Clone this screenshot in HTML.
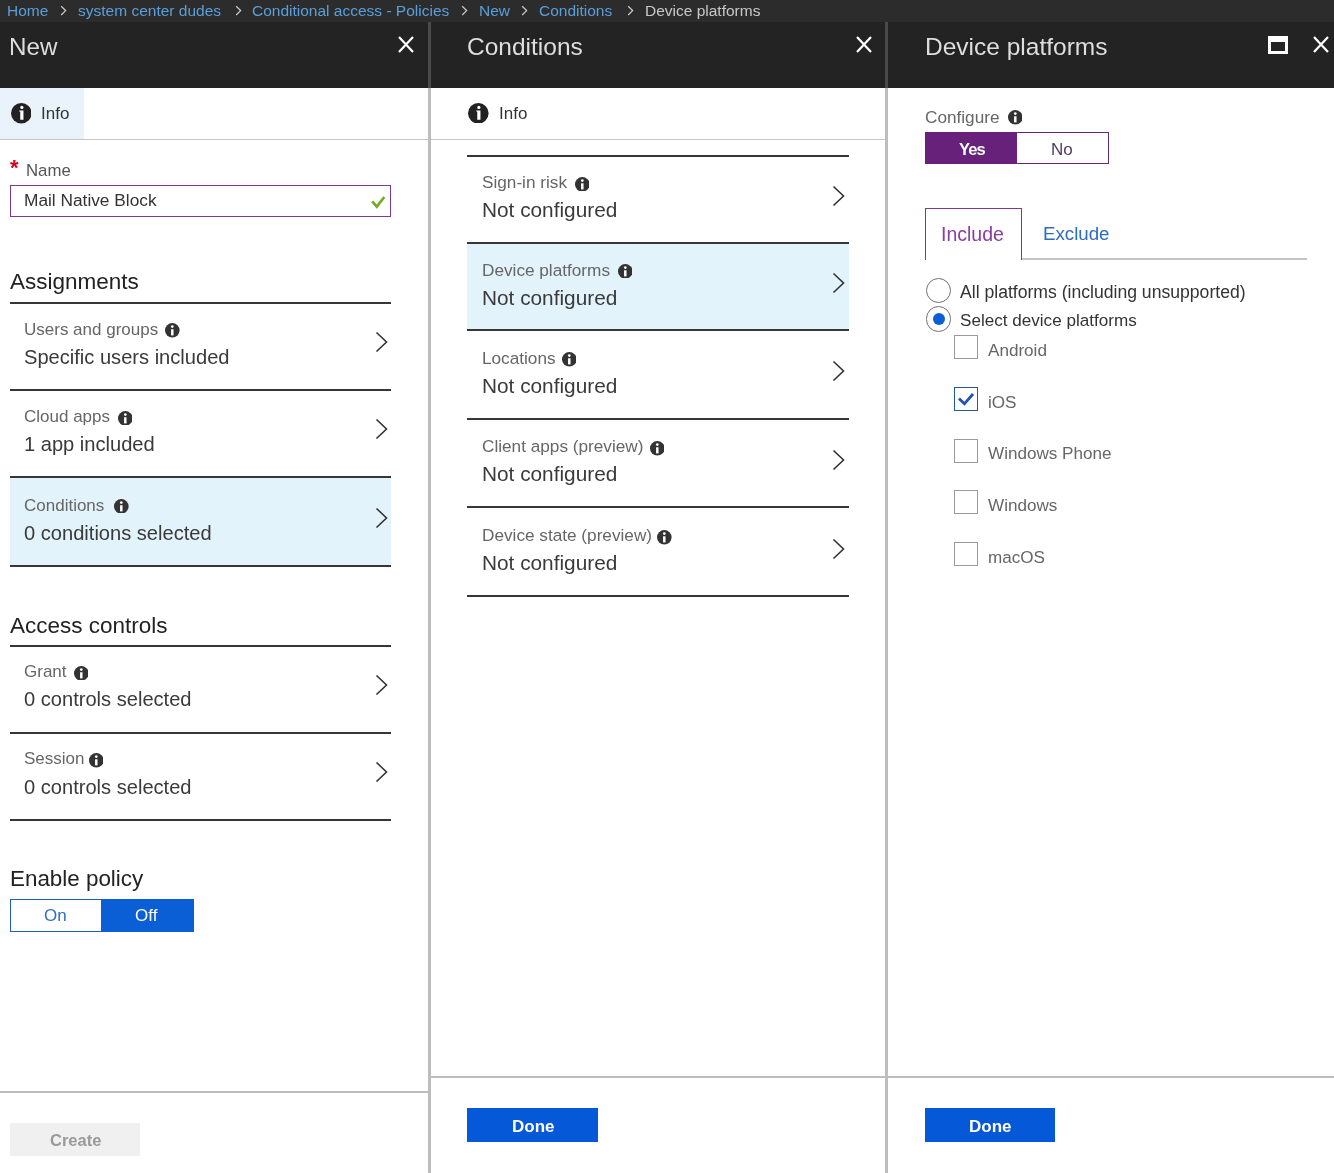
<!DOCTYPE html>
<html><head><meta charset="utf-8"><title>Device platforms</title>
<style>
html,body{margin:0;padding:0;background:#fff;}
body{width:1334px;height:1173px;position:relative;overflow:hidden;font-family:"Liberation Sans",sans-serif;}
.t{position:absolute;line-height:1;white-space:nowrap;will-change:transform;}
.r{position:absolute;display:block;}
</style></head><body>
<div class="r" style="left:0px;top:0px;width:1334px;height:22px;background:#2c2c2c;"></div>
<div class="t" style="left:6.8px;top:2.88px;font-size:15.5px;color:#5a9fdb;font-weight:normal">Home</div>
<svg class="r" style="left:60px;top:4.6px" width="8" height="12" viewBox="0 0 8 12"><path d="M1.2 1.2L5.6 5.6L1.2 10" stroke="#c8c8c8" stroke-width="1.3" fill="none"/></svg>
<div class="t" style="left:78px;top:2.88px;font-size:15.5px;color:#5a9fdb;font-weight:normal">system center dudes</div>
<svg class="r" style="left:234.5px;top:4.6px" width="8" height="12" viewBox="0 0 8 12"><path d="M1.2 1.2L5.6 5.6L1.2 10" stroke="#c8c8c8" stroke-width="1.3" fill="none"/></svg>
<div class="t" style="left:252.2px;top:2.88px;font-size:15.5px;color:#5a9fdb;font-weight:normal">Conditional access - Policies</div>
<svg class="r" style="left:460.5px;top:4.6px" width="8" height="12" viewBox="0 0 8 12"><path d="M1.2 1.2L5.6 5.6L1.2 10" stroke="#c8c8c8" stroke-width="1.3" fill="none"/></svg>
<div class="t" style="left:478.8px;top:2.88px;font-size:15.5px;color:#5a9fdb;font-weight:normal">New</div>
<svg class="r" style="left:521px;top:4.6px" width="8" height="12" viewBox="0 0 8 12"><path d="M1.2 1.2L5.6 5.6L1.2 10" stroke="#c8c8c8" stroke-width="1.3" fill="none"/></svg>
<div class="t" style="left:539px;top:2.88px;font-size:15.5px;color:#5a9fdb;font-weight:normal">Conditions</div>
<svg class="r" style="left:626.5px;top:4.6px" width="8" height="12" viewBox="0 0 8 12"><path d="M1.2 1.2L5.6 5.6L1.2 10" stroke="#c8c8c8" stroke-width="1.3" fill="none"/></svg>
<div class="t" style="left:644.7px;top:2.88px;font-size:15.5px;color:#c8c8c8;font-weight:normal">Device platforms</div>
<div class="r" style="left:0px;top:22px;width:1334px;height:66px;background:#232323;"></div>
<div class="t" style="left:8.9px;top:34.71px;font-size:24.2px;color:#dedede;font-weight:normal">New</div>
<div class="t" style="left:467.2px;top:35.26px;font-size:24.5px;color:#dedede;font-weight:normal">Conditions</div>
<div class="t" style="left:924.6px;top:34.86px;font-size:24.5px;color:#dedede;font-weight:normal">Device platforms</div>
<svg class="r" style="left:398px;top:36.4px" width="16" height="17" viewBox="0 0 16 17"><path d="M1 1L15 16M15 1L1 16" stroke="#fff" stroke-width="2.2" fill="none"/></svg>
<svg class="r" style="left:856px;top:36.4px" width="16" height="17" viewBox="0 0 16 17"><path d="M1 1L15 16M15 1L1 16" stroke="#fff" stroke-width="2.2" fill="none"/></svg>
<svg class="r" style="left:1313px;top:36.4px" width="16" height="17" viewBox="0 0 16 17"><path d="M1 1L15 16M15 1L1 16" stroke="#fff" stroke-width="2.2" fill="none"/></svg>
<div class="r" style="left:1267.5px;top:36px;width:20px;height:18px;box-sizing:border-box;border:3px solid #fff;border-top-width:6px"></div>
<div class="r" style="left:428px;top:22px;width:3px;height:66px;background:#4a4a4a;"></div>
<div class="r" style="left:885px;top:22px;width:3px;height:66px;background:#4a4a4a;"></div>
<div class="r" style="left:428px;top:88px;width:3px;height:1085px;background:#bdbdbd;"></div>
<div class="r" style="left:885px;top:88px;width:3px;height:1085px;background:#bdbdbd;"></div>
<div class="r" style="left:0px;top:88px;width:84px;height:51px;background:#eaf3fb;"></div>
<div class="r" style="left:0px;top:138.5px;width:428px;height:1.5px;background:#c6c6c6;"></div>
<svg class="r" style="left:10.70px;top:103.10px" width="20.6" height="20.6" viewBox="0 0 20 20"><circle cx="10" cy="10" r="10" fill="#222"/><path d="M9 7.2H12.1V16.2H9V8.3H8V7.2Z" fill="#fff"/><circle cx="10.55" cy="4.3" r="1.55" fill="#fff"/></svg>
<div class="t" style="left:41px;top:105.21px;font-size:17px;color:#333;font-weight:normal">Info</div>
<div class="t" style="left:9.5px;top:157.38px;font-size:22px;color:#d9001b;font-weight:bold">*</div>
<div class="t" style="left:26.2px;top:163.28px;font-size:16.8px;color:#555;font-weight:normal">Name</div>
<div class="r" style="left:10px;top:184.5px;width:381px;height:32.5px;box-sizing:border-box;border:1.5px solid #7b3a97"></div>
<div class="t" style="left:23.7px;top:191.96px;font-size:17.3px;color:#333;font-weight:normal">Mail Native Block</div>
<svg class="r" style="left:370px;top:195px" width="17" height="15" viewBox="0 0 17 15"><path d="M2.2 6.3L6.8 11.6L14.3 2" stroke="#7aa82a" stroke-width="2.8" fill="none"/></svg>
<div class="t" style="left:9.7px;top:270.95px;font-size:22.5px;color:#222;font-weight:normal">Assignments</div>
<div class="r" style="left:10px;top:477px;width:381px;height:88.5px;background:#e2f3fb;"></div>
<div class="r" style="left:10px;top:302px;width:381px;height:2px;background:#363636;"></div>
<div class="r" style="left:10px;top:389px;width:381px;height:2px;background:#363636;"></div>
<div class="r" style="left:10px;top:476px;width:381px;height:2px;background:#363636;"></div>
<div class="r" style="left:10px;top:564.5px;width:381px;height:2px;background:#363636;"></div>
<div class="t" style="left:24.4px;top:320.61px;font-size:17px;color:#666;font-weight:normal">Users and groups</div>
<div class="t" style="left:24.4px;top:346.99px;font-size:20.1px;color:#3a3a3a;font-weight:normal">Specific users included</div>
<svg class="r" style="left:375px;top:331px" width="13" height="22" viewBox="-1 -1 13 22"><path d="M0.5 0.5L10.5 10.0L0.5 19.5" stroke="#333" stroke-width="1.6" fill="none"/></svg>
<div class="t" style="left:24.4px;top:407.61px;font-size:17px;color:#666;font-weight:normal">Cloud apps</div>
<div class="t" style="left:24.4px;top:433.99px;font-size:20.1px;color:#3a3a3a;font-weight:normal">1 app included</div>
<svg class="r" style="left:375px;top:417.5px" width="13" height="22" viewBox="-1 -1 13 22"><path d="M0.5 0.5L10.5 10.0L0.5 19.5" stroke="#333" stroke-width="1.6" fill="none"/></svg>
<div class="t" style="left:24.4px;top:496.61px;font-size:17px;color:#666;font-weight:normal">Conditions</div>
<div class="t" style="left:24.4px;top:522.99px;font-size:20.1px;color:#3a3a3a;font-weight:normal">0 conditions selected</div>
<svg class="r" style="left:375px;top:507.3px" width="13" height="22" viewBox="-1 -1 13 22"><path d="M0.5 0.5L10.5 10.0L0.5 19.5" stroke="#333" stroke-width="1.6" fill="none"/></svg>
<svg class="r" style="left:165.20px;top:323.30px" width="14.6" height="14.6" viewBox="0 0 20 20"><circle cx="10" cy="10" r="10" fill="#333"/><rect x="8.3" y="8.6" width="3.4" height="8.4" fill="#fff"/><circle cx="10" cy="4.9" r="1.85" fill="#fff"/></svg>
<svg class="r" style="left:117.70px;top:410.50px" width="14.6" height="14.6" viewBox="0 0 20 20"><circle cx="10" cy="10" r="10" fill="#333"/><rect x="8.3" y="8.6" width="3.4" height="8.4" fill="#fff"/><circle cx="10" cy="4.9" r="1.85" fill="#fff"/></svg>
<svg class="r" style="left:114.00px;top:498.60px" width="14.6" height="14.6" viewBox="0 0 20 20"><circle cx="10" cy="10" r="10" fill="#333"/><rect x="8.3" y="8.6" width="3.4" height="8.4" fill="#fff"/><circle cx="10" cy="4.9" r="1.85" fill="#fff"/></svg>
<div class="t" style="left:9.7px;top:614.65px;font-size:22.5px;color:#222;font-weight:normal">Access controls</div>
<div class="r" style="left:10px;top:644.5px;width:381px;height:2px;background:#363636;"></div>
<div class="r" style="left:10px;top:731.6px;width:381px;height:2px;background:#363636;"></div>
<div class="r" style="left:10px;top:818.5px;width:381px;height:2px;background:#363636;"></div>
<div class="t" style="left:24.4px;top:663.11px;font-size:17px;color:#666;font-weight:normal">Grant</div>
<div class="t" style="left:24.4px;top:689.49px;font-size:20.1px;color:#3a3a3a;font-weight:normal">0 controls selected</div>
<svg class="r" style="left:375px;top:673.5px" width="13" height="22" viewBox="-1 -1 13 22"><path d="M0.5 0.5L10.5 10.0L0.5 19.5" stroke="#333" stroke-width="1.6" fill="none"/></svg>
<div class="t" style="left:24.4px;top:750.21px;font-size:17px;color:#666;font-weight:normal">Session</div>
<div class="t" style="left:24.4px;top:776.59px;font-size:20.1px;color:#3a3a3a;font-weight:normal">0 controls selected</div>
<svg class="r" style="left:375px;top:760.6px" width="13" height="22" viewBox="-1 -1 13 22"><path d="M0.5 0.5L10.5 10.0L0.5 19.5" stroke="#333" stroke-width="1.6" fill="none"/></svg>
<svg class="r" style="left:73.50px;top:665.90px" width="14.6" height="14.6" viewBox="0 0 20 20"><circle cx="10" cy="10" r="10" fill="#333"/><rect x="8.3" y="8.6" width="3.4" height="8.4" fill="#fff"/><circle cx="10" cy="4.9" r="1.85" fill="#fff"/></svg>
<svg class="r" style="left:88.90px;top:753.30px" width="14.6" height="14.6" viewBox="0 0 20 20"><circle cx="10" cy="10" r="10" fill="#333"/><rect x="8.3" y="8.6" width="3.4" height="8.4" fill="#fff"/><circle cx="10" cy="4.9" r="1.85" fill="#fff"/></svg>
<div class="t" style="left:9.7px;top:867.64px;font-size:22.4px;color:#222;font-weight:normal">Enable policy</div>
<div class="r" style="left:10px;top:899px;width:184px;height:33px;box-sizing:border-box;border:1.8px solid #1e5fbf;background:#fff"></div>
<div class="r" style="left:101px;top:899px;width:93px;height:33px;background:#0a5fd6;"></div>
<div class="t" style="left:44px;top:907.11px;font-size:17px;color:#2f6fc0;font-weight:normal">On</div>
<div class="t" style="left:135px;top:907.11px;font-size:17px;color:#fff;font-weight:normal">Off</div>
<div class="r" style="left:0px;top:1091px;width:428px;height:2px;background:#bdbdbd;"></div>
<div class="r" style="left:10px;top:1123px;width:130px;height:33px;background:#f0f0f0;"></div>
<div class="t" style="left:49.8px;top:1132.03px;font-size:16.5px;color:#9a9a9a;font-weight:bold">Create</div>
<div class="r" style="left:431px;top:138.5px;width:454px;height:1.5px;background:#c6c6c6;"></div>
<svg class="r" style="left:468.30px;top:102.90px" width="20.6" height="20.6" viewBox="0 0 20 20"><circle cx="10" cy="10" r="10" fill="#222"/><path d="M9 7.2H12.1V16.2H9V8.3H8V7.2Z" fill="#fff"/><circle cx="10.55" cy="4.3" r="1.55" fill="#fff"/></svg>
<div class="t" style="left:498.5px;top:105.31px;font-size:17px;color:#333;font-weight:normal">Info</div>
<div class="r" style="left:467px;top:243px;width:382px;height:87px;background:#e2f3fb;"></div>
<div class="r" style="left:467px;top:155px;width:382px;height:2px;background:#363636;"></div>
<div class="r" style="left:467px;top:242px;width:382px;height:2px;background:#363636;"></div>
<div class="r" style="left:467px;top:329px;width:382px;height:2px;background:#363636;"></div>
<div class="r" style="left:467px;top:417.5px;width:382px;height:2px;background:#363636;"></div>
<div class="r" style="left:467px;top:506px;width:382px;height:2px;background:#363636;"></div>
<div class="r" style="left:467px;top:594.5px;width:382px;height:2px;background:#363636;"></div>
<div class="t" style="left:481.9px;top:173.84px;font-size:17.2px;color:#666;font-weight:normal">Sign-in risk</div>
<div class="t" style="left:481.9px;top:199.89px;font-size:20.8px;color:#3a3a3a;font-weight:normal">Not configured</div>
<svg class="r" style="left:832px;top:184.5px" width="13" height="22" viewBox="-1 -1 13 22"><path d="M0.5 0.5L10.5 10.0L0.5 19.5" stroke="#333" stroke-width="1.6" fill="none"/></svg>
<div class="t" style="left:481.9px;top:261.84px;font-size:17.2px;color:#666;font-weight:normal">Device platforms</div>
<div class="t" style="left:481.9px;top:287.89px;font-size:20.8px;color:#3a3a3a;font-weight:normal">Not configured</div>
<svg class="r" style="left:832px;top:271.5px" width="13" height="22" viewBox="-1 -1 13 22"><path d="M0.5 0.5L10.5 10.0L0.5 19.5" stroke="#333" stroke-width="1.6" fill="none"/></svg>
<div class="t" style="left:481.9px;top:349.84px;font-size:17.2px;color:#666;font-weight:normal">Locations</div>
<div class="t" style="left:481.9px;top:375.89px;font-size:20.8px;color:#3a3a3a;font-weight:normal">Not configured</div>
<svg class="r" style="left:832px;top:360px" width="13" height="22" viewBox="-1 -1 13 22"><path d="M0.5 0.5L10.5 10.0L0.5 19.5" stroke="#333" stroke-width="1.6" fill="none"/></svg>
<div class="t" style="left:481.9px;top:438.34px;font-size:17.2px;color:#666;font-weight:normal">Client apps (preview)</div>
<div class="t" style="left:481.9px;top:464.39px;font-size:20.8px;color:#3a3a3a;font-weight:normal">Not configured</div>
<svg class="r" style="left:832px;top:449.0px" width="13" height="22" viewBox="-1 -1 13 22"><path d="M0.5 0.5L10.5 10.0L0.5 19.5" stroke="#333" stroke-width="1.6" fill="none"/></svg>
<div class="t" style="left:481.9px;top:526.84px;font-size:17.2px;color:#666;font-weight:normal">Device state (preview)</div>
<div class="t" style="left:481.9px;top:552.89px;font-size:20.8px;color:#3a3a3a;font-weight:normal">Not configured</div>
<svg class="r" style="left:832px;top:537.5px" width="13" height="22" viewBox="-1 -1 13 22"><path d="M0.5 0.5L10.5 10.0L0.5 19.5" stroke="#333" stroke-width="1.6" fill="none"/></svg>
<svg class="r" style="left:574.50px;top:176.70px" width="14.6" height="14.6" viewBox="0 0 20 20"><circle cx="10" cy="10" r="10" fill="#333"/><rect x="8.3" y="8.6" width="3.4" height="8.4" fill="#fff"/><circle cx="10" cy="4.9" r="1.85" fill="#fff"/></svg>
<svg class="r" style="left:617.80px;top:263.90px" width="14.6" height="14.6" viewBox="0 0 20 20"><circle cx="10" cy="10" r="10" fill="#333"/><rect x="8.3" y="8.6" width="3.4" height="8.4" fill="#fff"/><circle cx="10" cy="4.9" r="1.85" fill="#fff"/></svg>
<svg class="r" style="left:561.50px;top:352.40px" width="14.6" height="14.6" viewBox="0 0 20 20"><circle cx="10" cy="10" r="10" fill="#333"/><rect x="8.3" y="8.6" width="3.4" height="8.4" fill="#fff"/><circle cx="10" cy="4.9" r="1.85" fill="#fff"/></svg>
<svg class="r" style="left:649.60px;top:441.20px" width="14.6" height="14.6" viewBox="0 0 20 20"><circle cx="10" cy="10" r="10" fill="#333"/><rect x="8.3" y="8.6" width="3.4" height="8.4" fill="#fff"/><circle cx="10" cy="4.9" r="1.85" fill="#fff"/></svg>
<svg class="r" style="left:657.00px;top:530.00px" width="14.6" height="14.6" viewBox="0 0 20 20"><circle cx="10" cy="10" r="10" fill="#333"/><rect x="8.3" y="8.6" width="3.4" height="8.4" fill="#fff"/><circle cx="10" cy="4.9" r="1.85" fill="#fff"/></svg>
<svg class="r" style="left:1007.80px;top:110.30px" width="14.6" height="14.6" viewBox="0 0 20 20"><circle cx="10" cy="10" r="10" fill="#333"/><rect x="8.3" y="8.6" width="3.4" height="8.4" fill="#fff"/><circle cx="10" cy="4.9" r="1.85" fill="#fff"/></svg>
<div class="r" style="left:431px;top:1076px;width:454px;height:2px;background:#bdbdbd;"></div>
<div class="r" style="left:467px;top:1108px;width:131px;height:34px;background:#0558d8;"></div>
<div class="t" style="left:512px;top:1117.61px;font-size:17px;color:#fff;font-weight:bold">Done</div>
<div class="t" style="left:925px;top:109.04px;font-size:17.2px;color:#666;font-weight:normal">Configure</div>
<div class="r" style="left:925px;top:132px;width:184px;height:32px;box-sizing:border-box;border:1.6px solid #5e2c72;background:#fff"></div>
<div class="r" style="left:925px;top:132px;width:92px;height:32px;background:#68217a;"></div>
<div class="t" style="left:958.5px;top:140.53px;font-size:16.5px;color:#fff;font-weight:bold"><span style="letter-spacing:-0.9px">Yes</span></div>
<div class="t" style="left:1051px;top:141.31px;font-size:17px;color:#503c62;font-weight:normal">No</div>
<div class="r" style="left:925px;top:207.5px;width:97px;height:52px;box-sizing:border-box;border:1.8px solid #7b3a97;border-bottom:none"></div>
<div class="r" style="left:1022px;top:257.5px;width:285px;height:2px;background:#c4c4c4;"></div>
<div class="t" style="left:941.4px;top:224.79px;font-size:19.5px;color:#8a3d9e;font-weight:normal">Include</div>
<div class="t" style="left:1043px;top:225.17px;font-size:18.7px;color:#2b6cc0;font-weight:normal">Exclude</div>
<div class="r" style="left:926.1px;top:277.7px;width:25.2px;height:25.2px;box-sizing:border-box;border:1.8px solid #727272;border-radius:50%"></div>
<div class="r" style="left:926.1px;top:306.4px;width:25.2px;height:25.2px;box-sizing:border-box;border:1.8px solid #727272;border-radius:50%"></div>
<div class="r" style="left:932.9px;top:313px;width:12px;height:12px;background:#0a5fd6;border-radius:50%"></div>
<div class="t" style="left:959.5px;top:283.50px;font-size:17.6px;color:#333;font-weight:normal">All platforms (including unsupported)</div>
<div class="t" style="left:959.5px;top:311.52px;font-size:17.1px;color:#333;font-weight:normal">Select device platforms</div>
<div class="r" style="left:954px;top:335px;width:24px;height:24px;box-sizing:border-box;border:1.5px solid #9a9a9a"></div>
<div class="t" style="left:987.5px;top:341.52px;font-size:17.1px;color:#666;font-weight:normal">Android</div>
<div class="r" style="left:954px;top:387px;width:24px;height:24px;box-sizing:border-box;border:1.5px solid #1f5c97"></div>
<div class="t" style="left:987.5px;top:393.52px;font-size:17.1px;color:#666;font-weight:normal">iOS</div>
<div class="r" style="left:954px;top:438.5px;width:24px;height:24px;box-sizing:border-box;border:1.5px solid #9a9a9a"></div>
<div class="t" style="left:987.5px;top:445.02px;font-size:17.1px;color:#666;font-weight:normal">Windows Phone</div>
<div class="r" style="left:954px;top:490px;width:24px;height:24px;box-sizing:border-box;border:1.5px solid #9a9a9a"></div>
<div class="t" style="left:987.5px;top:496.52px;font-size:17.1px;color:#666;font-weight:normal">Windows</div>
<div class="r" style="left:954px;top:542px;width:24px;height:24px;box-sizing:border-box;border:1.5px solid #9a9a9a"></div>
<div class="t" style="left:987.5px;top:548.52px;font-size:17.1px;color:#666;font-weight:normal">macOS</div>
<svg class="r" style="left:954px;top:387px" width="24" height="24" viewBox="0 0 24 24"><path d="M5 11.4L10.4 16.8L19 7" stroke="#2152b2" stroke-width="2.8" fill="none"/></svg>
<div class="r" style="left:888px;top:1076px;width:446px;height:2px;background:#bdbdbd;"></div>
<div class="r" style="left:925px;top:1108px;width:130px;height:34px;background:#0558d8;"></div>
<div class="t" style="left:969px;top:1117.61px;font-size:17px;color:#fff;font-weight:bold">Done</div>
</body></html>
